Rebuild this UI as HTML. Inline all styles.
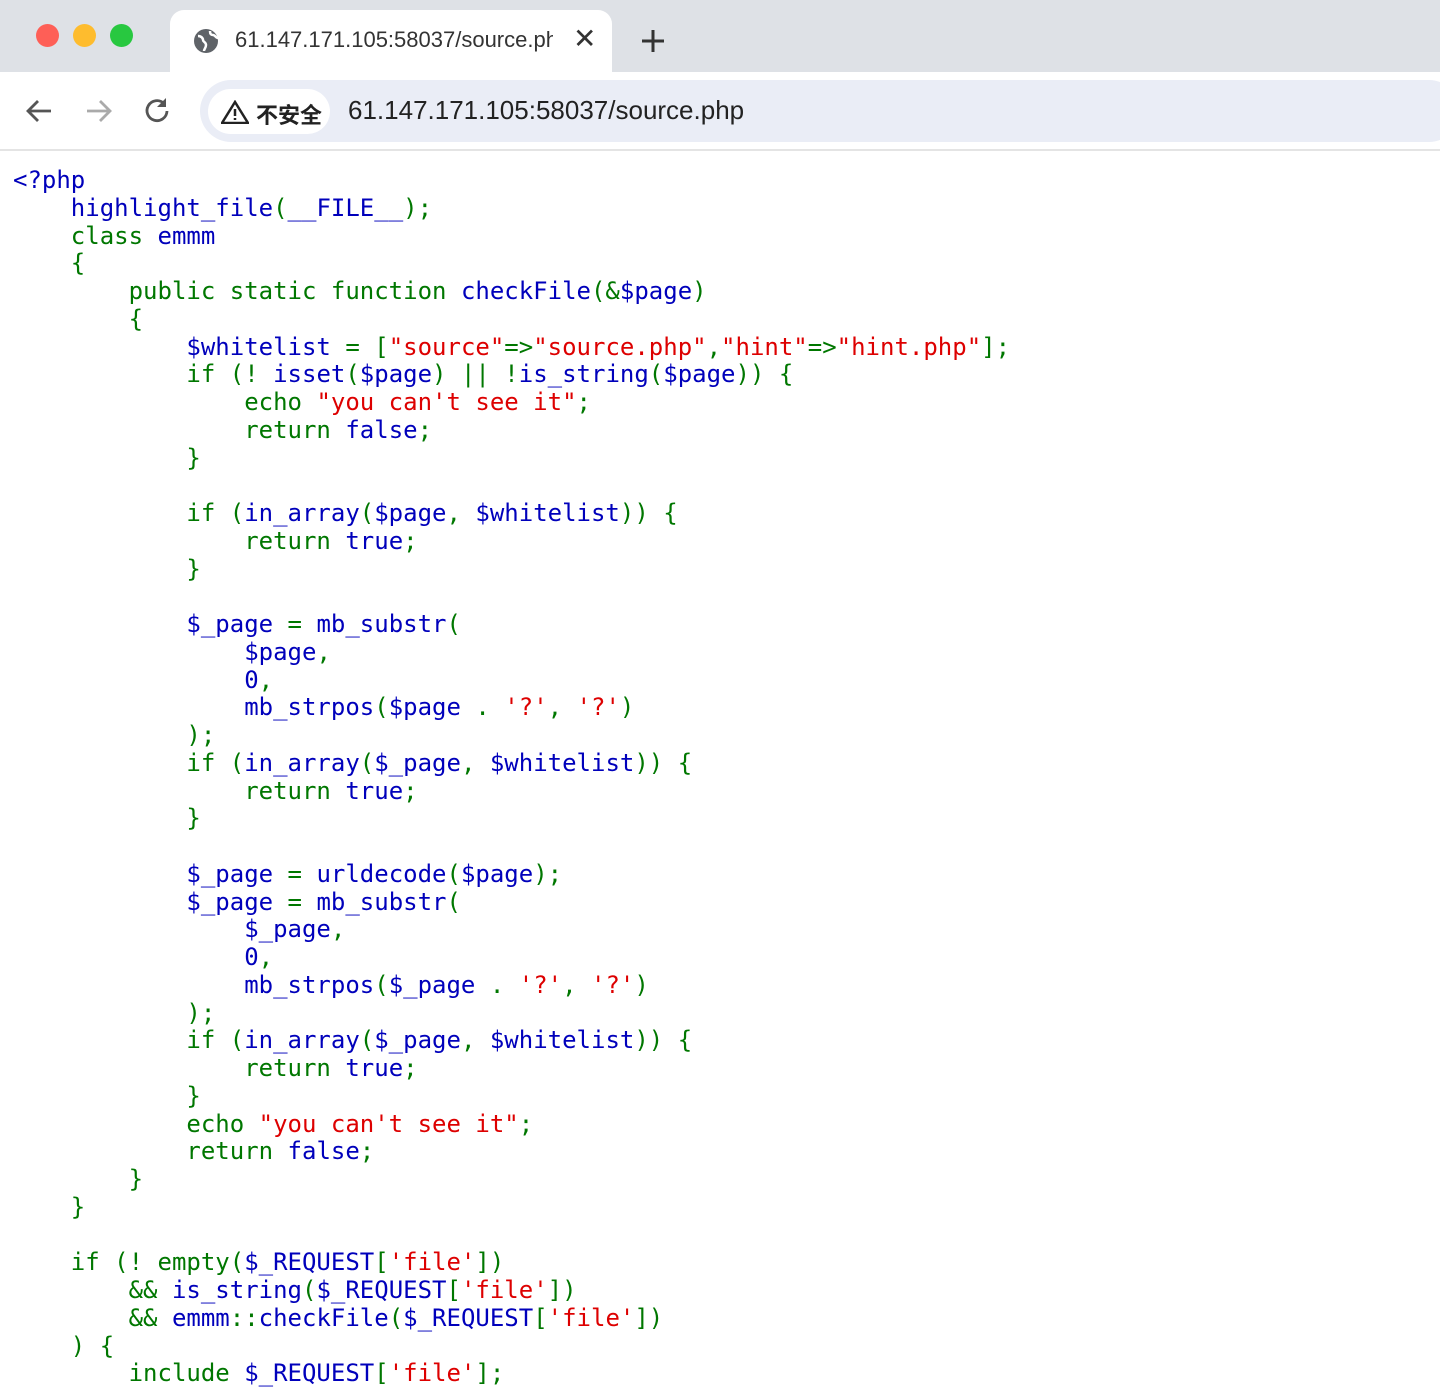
<!DOCTYPE html>
<html><head><meta charset="utf-8"><style>
*{margin:0;padding:0;box-sizing:border-box}
body{width:1440px;height:1364px;overflow:hidden;background:#fff;font-family:"Liberation Sans","Noto Sans CJK SC",sans-serif;position:relative}
.tabbar{position:absolute;left:0;top:0;width:1440px;height:72px;background:#dee1e6}
.dot{position:absolute;top:24px;width:23px;height:23px;border-radius:50%}
.tab{position:absolute;left:170px;top:10px;width:442px;height:62px;background:#fff;border-radius:14px 14px 0 0}
.tabtitle{position:absolute;left:65px;top:17px;font-size:22px;color:#333;white-space:nowrap;width:318px;overflow:hidden}
.toolbar{position:absolute;left:0;top:72px;width:1440px;height:79px;background:#fff;border-bottom:2px solid #e4e4e4}
.omni{position:absolute;left:200px;top:8px;width:1260px;height:62px;background:#eaedf6;border-radius:31px}
.chip{position:absolute;left:8px;top:9px;width:122px;height:45px;background:#fff;border-radius:23px;font-size:22px;color:#222;padding:9px 0 0 48px;font-weight:bold}
.url{position:absolute;left:148px;top:15px;font-size:26px;color:#222}
pre{position:absolute;left:13px;top:167px;font-family:"DejaVu Sans Mono",monospace;font-size:24px;line-height:27.75px;color:#0000bb}
.g{color:#007700}.r{color:#dd0000}.b{color:#0000bb}
</style></head><body>
<div class="tabbar">
<div class="dot" style="left:36px;background:#fe5f57"></div>
<div class="dot" style="left:73px;background:#febc2e"></div>
<div class="dot" style="left:110px;background:#28c840"></div>
<div class="tab">
<svg style="position:absolute;left:22px;top:17px" width="28" height="28" viewBox="0 0 28 28"><circle cx="14" cy="14" r="12" fill="#5f6368"/><path d="M6 9c3 0 5 2 5 4s3 2 3 5-2 4-2 6M18 4c0 3 1 4 3 4s3 3 5 3" stroke="#fff" stroke-width="2.5" fill="none"/></svg>
<div class="tabtitle">61.147.171.105:58037/source.php</div>
<div style="position:absolute;left:403px;top:12px;font-size:28px;color:#333">✕</div>
</div>
<svg style="position:absolute;left:640px;top:28px" width="26" height="26"><path d="M13 2v22M2 13h22" stroke="#333" stroke-width="3"/></svg>
</div>
<div class="toolbar">
<svg style="position:absolute;left:24px;top:25px" width="30" height="28"><path d="M27 14H4M14 4L4 14l10 10" stroke="#555" stroke-width="2.8" fill="none"/></svg>
<svg style="position:absolute;left:84px;top:25px" width="30" height="28"><path d="M3 14h23M16 4l10 10-10 10" stroke="#aaa" stroke-width="2.8" fill="none"/></svg>
<svg style="position:absolute;left:143px;top:24px" width="30" height="30"><path d="M24 15a10 10 0 1 1-3-7.5" stroke="#555" stroke-width="2.8" fill="none"/><path d="M23 2v9h-9z" fill="#555"/></svg>
<div class="omni">
<div class="chip"><svg style="position:absolute;left:13px;top:11px" width="28" height="24"><path d="M14 2L1 23h26z" stroke="#222" stroke-width="2.5" fill="none"/><path d="M14 9v7M14 18v2" stroke="#222" stroke-width="2.5"/></svg>不安全</div>
<div class="url">61.147.171.105:58037/source.php</div>
</div>
</div>
<pre><span class="b">&lt;?php
    highlight_file</span><span class="g">(</span><span class="b">__FILE__</span><span class="g">);
    class </span><span class="b">emmm
    </span><span class="g">{
        public static function </span><span class="b">checkFile</span><span class="g">(&amp;</span><span class="b">$page</span><span class="g">)
        {
            </span><span class="b">$whitelist </span><span class="g">= [</span><span class="r">"source"</span><span class="g">=&gt;</span><span class="r">"source.php"</span><span class="g">,</span><span class="r">"hint"</span><span class="g">=&gt;</span><span class="r">"hint.php"</span><span class="g">];
            if (! </span><span class="b">isset</span><span class="g">(</span><span class="b">$page</span><span class="g">) || !</span><span class="b">is_string</span><span class="g">(</span><span class="b">$page</span><span class="g">)) {
                echo </span><span class="r">"you can't see it"</span><span class="g">;
                return </span><span class="b">false</span><span class="g">;
            }

            if (</span><span class="b">in_array</span><span class="g">(</span><span class="b">$page</span><span class="g">, </span><span class="b">$whitelist</span><span class="g">)) {
                return </span><span class="b">true</span><span class="g">;
            }

            </span><span class="b">$_page </span><span class="g">= </span><span class="b">mb_substr</span><span class="g">(
                </span><span class="b">$page</span><span class="g">,
                </span><span class="b">0</span><span class="g">,
                </span><span class="b">mb_strpos</span><span class="g">(</span><span class="b">$page </span><span class="g">. </span><span class="r">'?'</span><span class="g">, </span><span class="r">'?'</span><span class="g">)
            );
            if (</span><span class="b">in_array</span><span class="g">(</span><span class="b">$_page</span><span class="g">, </span><span class="b">$whitelist</span><span class="g">)) {
                return </span><span class="b">true</span><span class="g">;
            }

            </span><span class="b">$_page </span><span class="g">= </span><span class="b">urldecode</span><span class="g">(</span><span class="b">$page</span><span class="g">);
            </span><span class="b">$_page </span><span class="g">= </span><span class="b">mb_substr</span><span class="g">(
                </span><span class="b">$_page</span><span class="g">,
                </span><span class="b">0</span><span class="g">,
                </span><span class="b">mb_strpos</span><span class="g">(</span><span class="b">$_page </span><span class="g">. </span><span class="r">'?'</span><span class="g">, </span><span class="r">'?'</span><span class="g">)
            );
            if (</span><span class="b">in_array</span><span class="g">(</span><span class="b">$_page</span><span class="g">, </span><span class="b">$whitelist</span><span class="g">)) {
                return </span><span class="b">true</span><span class="g">;
            }
            echo </span><span class="r">"you can't see it"</span><span class="g">;
            return </span><span class="b">false</span><span class="g">;
        }
    }

    if (! empty(</span><span class="b">$_REQUEST</span><span class="g">[</span><span class="r">'file'</span><span class="g">])
        &amp;&amp; </span><span class="b">is_string</span><span class="g">(</span><span class="b">$_REQUEST</span><span class="g">[</span><span class="r">'file'</span><span class="g">])
        &amp;&amp; </span><span class="b">emmm</span><span class="g">::</span><span class="b">checkFile</span><span class="g">(</span><span class="b">$_REQUEST</span><span class="g">[</span><span class="r">'file'</span><span class="g">])
    ) {
        include </span><span class="b">$_REQUEST</span><span class="g">[</span><span class="r">'file'</span><span class="g">];</span></pre>
</body></html>
